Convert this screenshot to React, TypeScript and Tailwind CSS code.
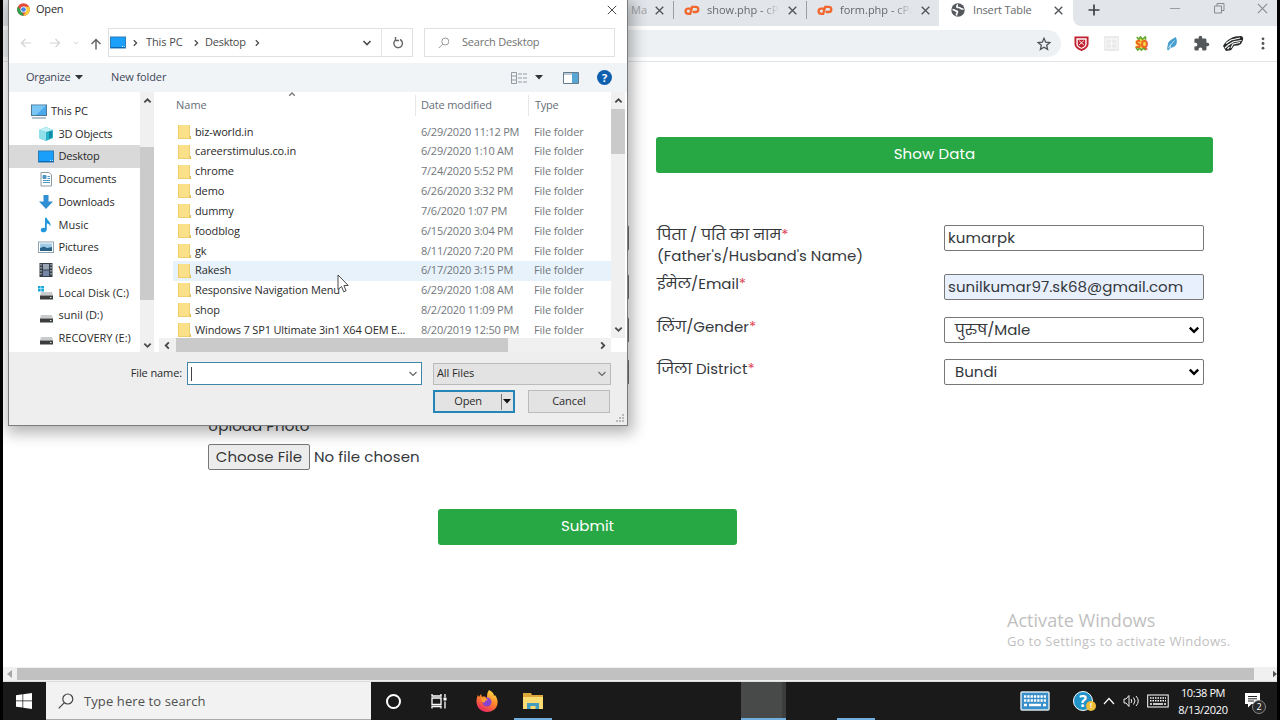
import React from 'react';

const UI = "font-['Open_Sans','Noto_Sans',sans-serif]";

const folders = [
  ['biz-world.in', '6/29/2020 11:12 PM'],
  ['careerstimulus.co.in', '6/29/2020 1:10 AM'],
  ['chrome', '7/24/2020 5:52 PM'],
  ['demo', '6/26/2020 3:32 PM'],
  ['dummy', '7/6/2020 1:07 PM'],
  ['foodblog', '6/15/2020 3:04 PM'],
  ['gk', '8/11/2020 7:20 PM'],
  ['Rakesh', '6/17/2020 3:15 PM'],
  ['Responsive Navigation Menu', '6/29/2020 1:08 AM'],
  ['shop', '8/2/2020 11:09 PM'],
  ['Windows 7 SP1 Ultimate 3in1 X64 OEM E...', '8/20/2019 12:50 PM'],
];

function Chevron({ dir, className = '' }: { dir: 'up' | 'down' | 'left' | 'right'; className?: string }) {
  const d = { up: 'M1.5 6 5 2.5 8.5 6', down: 'M1.5 3 5 6.5 8.5 3', left: 'M6.5 1.5 3 5 6.5 8.5', right: 'M3.5 1.5 7 5 3.5 8.5' }[dir];
  return (
    <svg viewBox="0 0 10 10" className={`shrink-0 ${className}`} fill="none" stroke="currentColor" strokeWidth="1.6">
      <path d={d} />
    </svg>
  );
}

function Cross({ className = '' }: { className?: string }) {
  return (
    <svg viewBox="0 0 10 10" className={`shrink-0 ${className}`} fill="none" stroke="currentColor">
      <path d="M.8.8l8.4 8.4M9.2.8.8 9.2" />
    </svg>
  );
}

function Monitor({ stand = false }: { stand?: boolean }) {
  return stand ? (
    <svg viewBox="0 0 16 15" className="h-[15px] w-4">
      <rect x=".5" y="1" width="15" height="10.5" fill="#4aa9ea" stroke="#4b7896" />
      <path d="M1 1.5h14L5 11H1z" fill="#7ac6f5" />
      <path d="M1 14h14" stroke="#6d8798" />
    </svg>
  ) : (
    <svg viewBox="0 0 16 15" className="h-[15px] w-4 shrink-0">
      <rect x=".5" y="2" width="15" height="11" fill="#1a9ffb" stroke="#2a7cb8" />
      <path d="M1 12.5h14" stroke="#0d66b0" />
      <path d="M12 11.5h1M14 11.5h.8" stroke="#d8efff" />
    </svg>
  );
}

function Drive({ win = false }: { win?: boolean }) {
  return (
    <svg viewBox="0 0 16 16" className="size-4">
      {win && <path d="M0 1h2.600v2.400H0zM3.200 1h2.800v2.400H3.200zM0 4h2.600v2.400H0zM3.200 4h2.800v2.400H3.200z" fill="#16a9dc" />}
      <path d="M3 7h11l1 3.500H2z" fill="#c9cccd" />
      <rect x="2" y="10.500" width="13" height="4" fill="#3c3d3e" />
      <path d="M12 12.5h1.500" stroke="#c8eebe" />
    </svg>
  );
}

const sidebar: [string, React.ReactNode][] = [
  ['3D Objects', <svg viewBox="0 0 16 16" className="size-4"><path d="M1 4l7-3 7 3v8l-7 3-7-3z" fill="#27b2c6" /><path d="M1 4l7 2v9l-7-3z" fill="#8fe0ea" /><path d="M1 4l7-3 7 3-7 2z" fill="#c3f1f5" /><path d="M11 6l3-1v6l-3 2z" fill="#118ba5" /></svg>],
  ['Desktop', <Monitor />],
  ['Documents', <svg viewBox="0 0 16 16" className="size-4"><path d="M3 1.5h8l2.500 2.500v11H3z" fill="#fff" stroke="#8d9aa3" /><path d="M5 4.500h3v3H5zM5 9.500h7M5 11.500h7M9.500 5.500h2.500M9.500 7.500h2.500" fill="#4e94c4" stroke="#4e94c4" /></svg>],
  ['Downloads', <svg viewBox="0 0 16 16" className="size-4"><path d="M5.500 1h5v6.500H15L8 15 1 7.500h4.500z" fill="#2f8fd2" /></svg>],
  ['Music', <svg viewBox="0 0 16 16" className="size-4"><path d="M7 .8h1.800c.3 3 4.600 4 3.500 8.700-.4-2-2-2.800-3.500-3.300v6.300c0 3.700-6.300 3.600-6 .5.200-2 2.500-2.700 4.200-1.900z" fill="#2196dc" /></svg>],
  ['Pictures', <svg viewBox="0 0 16 16" className="size-4"><rect x=".5" y="3" width="15" height="10.500" fill="#fff" stroke="#8da3b1" /><rect x="2" y="4.500" width="12" height="7.500" fill="#9fcbe9" /><path d="M2 12V9l4-1.500L9 9l5-1v4z" fill="#2a6188" /></svg>],
  ['Videos', <svg viewBox="0 0 16 16" className="size-4"><rect x="1.500" y="1" width="13" height="14" fill="#37404a" /><path d="M3 2v12M13 2v12" stroke="#d7dbe0" strokeDasharray="1.500 1.500" /><rect x="5" y="2" width="6" height="5.500" fill="#99a5b4" /><rect x="5" y="8.500" width="6" height="5.500" fill="#7587a6" /></svg>],
  ['Local Disk (C:)', <Drive win />],
  ['sunil (D:)', <Drive />],
  ['RECOVERY (E:)', <Drive />],
];

const sideTracking = ['tracking-[-0.2px]', 'tracking-[-0.2px]', 'tracking-[-0.1px]', 'tracking-[-0.15px]', 'tracking-[0px]', 'tracking-[-0.15px]', 'tracking-[-0.05px]', 'tracking-[0.02px]', 'tracking-[0px]', 'tracking-[0px]'];

function FolderIcon() {
  return (
    <svg viewBox="0 0 14 16" className="h-4 w-3.5 shrink-0">
      <path d="M0 1h12v11h1v3H0z" fill="#e3bd57" />
      <path d="M0 1h11.500v13.500H0z" fill="#fbe08a" />
      <path d="M0 1h1v13.500H0z" fill="#f0ca62" />
    </svg>
  );
}

function CpanelIcon() {
  return (
    <svg viewBox="0 0 16 11" className="h-[11px] w-4 shrink-0" fill="none" stroke="#f2672e" strokeWidth="2.300" strokeLinecap="round">
      <path d="M6.800 3.600H4.200a2.600 2.600 0 0 0 0 5.200h2l2-7h3.500a2.500 2.500 0 0 1 0 5.200H9.500" />
    </svg>
  );
}

function Tab({ title }: { title: string }) {
  return (
    <div className="flex h-full w-[133px] items-center pb-1.5">
      <span className="h-[18px] w-px shrink-0 bg-[#9b9fa4]" />
      <span className="ml-[10px] flex"><CpanelIcon /></span>
      <span className="ml-[7px] w-[76px] shrink-0 whitespace-nowrap text-[11px] text-[#66696c] [mask-image:linear-gradient(90deg,#000_72%,transparent_95%)]">{title}</span>
      <Cross className="ml-[5px] size-[9px] stroke-[1.5] text-[#505357]" />
    </div>
  );
}

function TabStrip() {
  return (
    <div className="flex h-[26px] shrink-0 bg-[#e2e5e9]">
      <div className="flex w-[670px] items-center justify-end pb-1.5 pr-[9px] text-[11px] text-[#a0a2a5]">
        <span className="mr-2">Ma</span>
        <Cross className="size-[9px] stroke-[1.5] text-[#505357]" />
      </div>
      <Tab title="show.php - cPa" />
      <Tab title="form.php - cPa" />
      <div className="flex w-[134px] items-center bg-white pb-1.5 pl-3">
        <svg viewBox="0 0 14 14" className="size-3.5 shrink-0"><circle cx="7" cy="7" r="6.700" fill="#54575b" /><path d="M1.500 6.500c2 .2 2 1 3.500 1.300s2 1 1 2.200-.3 1.600-.3 2.600M6 1.500c1 1-.6 1.600 0 2.600.8 1 2-.2 3 .8s1.600 1.700 3.500.8" fill="none" stroke="#fff" strokeWidth="1.700" /></svg>
        <span className="ml-2 w-[72px] whitespace-nowrap text-[11px] tracking-[-0.15px] text-[#66696c]">Insert Table</span>
        <Cross className="ml-[9px] size-[9px] stroke-[1.5] text-[#505357]" />
      </div>
      <div className="flex-1 bg-white">
        <div className="flex h-full items-center rounded-bl-lg bg-[#e2e5e9] pb-1.5 pl-[15px] text-[#888b8f]">
          <svg viewBox="0 0 12 12" className="size-3"><path d="M6 .5v11M.5 6h11" stroke="#3e4145" strokeWidth="1.700" /></svg>
          <span className="ml-[70px] h-px w-2.5 -translate-y-0.5 bg-[#9b9da1]" />
          <svg viewBox="0 0 12 12" className="ml-[33px] size-3 -translate-y-0.5" fill="none" stroke="currentColor"><path d="M1.500 4h7v7h-7zM4 4V1.500h7v7H8.500" /></svg>
          <Cross className="ml-8 size-[11px] -translate-y-0.5" />
        </div>
      </div>
    </div>
  );
}

function Toolbar() {
  return (
    <div className="flex h-9 shrink-0 items-center border-b border-[#e1e4e8] bg-white">
      <div className="flex h-[27px] w-[1058px] items-center justify-end rounded-r-full bg-[#eef1f3] pr-[10px]">
        <svg viewBox="0 0 16 16" className="size-3.5" fill="none" stroke="#505458" strokeWidth="1.500"><path d="m8 1.500 1.900 4.400 4.800.4-3.600 3.200 1 4.700L8 11.700l-4.100 2.500 1-4.700L1.300 6.300l4.800-.4z" /></svg>
      </div>
      <svg viewBox="0 0 16 16" className="ml-[13px] size-[15px]"><path d="M1.500 1.500h13v7c0 4-4 5.500-6.500 6.500-2.500-1-6.500-2.500-6.500-6.500z" fill="#fff" stroke="#c0202f" strokeWidth="2" /><path d="M4 4h8v5c0 2-4 3.500-4 3.500S4 11 4 9z" fill="#c0202f" /><path d="m5.500 5 5 4.500m0-4.500-5 4.500" stroke="#fff" /></svg>
      <svg viewBox="0 0 16 16" className="ml-[15px] size-[15px]"><rect width="16" height="16" rx="1" fill="#eaeaea" /><path d="M2 3h12v10H2zM8 3v10M4 8h8" fill="none" stroke="#f8f8f8" strokeWidth="1.200" /></svg>
      <div className="relative ml-[15px] flex size-[15px] items-center justify-center">
        <svg viewBox="0 0 16 16" className="absolute size-[15px]"><circle cx="8" cy="8" r="5.500" fill="#f8d748" /><path d="M3 1l2 2.500L7 1l2 2.500L12 1l.5 3M2 12l2 3 2-2 2 2 2-2 3 2" fill="none" stroke="#68a936" strokeWidth="1.800" /></svg>
        <span className="relative text-[10px] font-black leading-none tracking-[-0.5px] text-[#ea6520]">SQ</span>
      </div>
      <svg viewBox="0 0 16 16" className="ml-[15px] size-[15px]"><path d="M12.500 1c2 4 2 9-3 11l-3 1-2 2.500L3 14l1-4c0-5 4-6 8.500-9z" fill="#469fcf" /><path d="M4 13.500 11 5M7 13l-.5-4" stroke="#c9e8f6" fill="none" /></svg>
      <svg viewBox="0 0 24 24" className="ml-[14px] size-[17px]"><path d="M20.500 11H19V7a2 2 0 0 0-2-2h-4V3.500a2.500 2.500 0 0 0-5 0V5H4a2 2 0 0 0-2 2v3.800h1.500a2.700 2.700 0 0 1 0 5.400H2V20a2 2 0 0 0 2 2h3.800v-1.500a2.700 2.700 0 0 1 5.400 0V22H17a2 2 0 0 0 2-2v-4h1.500a2.500 2.500 0 0 0 0-5z" fill="#55585b" /></svg>
      <svg viewBox="0 0 22 17" className="ml-[12px] h-[17px] w-[22px]"><path d="M1 11C5 4 11 1 19 1c2 .5 2.500 2 2 4l-2 4-3 1.500-4 .2-3 4.500-5 .8-1-1.500z" fill="#292a2b" /><path d="m4 8.500 5-3.500L18 3M5.500 10.500l6-3.700 8-1.300M9 12.800l2-3.800 7-1.500M3 13l4-3.500M5.500 14l2-2" stroke="#fff" fill="none" strokeWidth="1.100" /></svg>
      <svg viewBox="0 0 4 16" className="ml-[17px] h-[15px] w-1"><circle cx="2" cy="3" r="1.500" fill="#515458" /><circle cx="2" cy="8" r="1.500" fill="#515458" /><circle cx="2" cy="13" r="1.500" fill="#515458" /></svg>
    </div>
  );
}

const star = <span className="text-[#e0485a]">*</span>;
const box = 'flex h-[26px] w-[260px] items-center rounded-[2px] border border-[#777] whitespace-nowrap';

function SelectBox({ value }: { value: string }) {
  return (
    <div className={`${box} justify-between bg-white pl-[10px] pr-[3px]`}>
      <span className="-mt-px">{value}</span>
      <Chevron dir="down" className="size-3 text-black [stroke-width:2]" />
    </div>
  );
}

function Page() {
  return (
    <main className="h-[605px] shrink-0 overflow-hidden bg-white pt-[74px] font-['Poppins','Inter','Noto_Sans_Devanagari',sans-serif] text-[15px] text-[#35383b]">
      <div className="ml-[653px] mt-px flex h-9 w-[557px] items-center justify-center rounded-[3px] bg-[#28a745] text-[15px] tracking-[0.1px] text-white"><span className="-mt-px">Show Data</span></div>
      <section className="ml-[205px] mt-[52px] grid grid-cols-[161px_288px_287px_260px] grid-rows-[49px_43px_42px_26px] leading-[21px]">
        <span /><div className={box} />
        <div className="-mt-px whitespace-nowrap"><div>पिता / पति का नाम{star}</div><div>(Father's/Husband's Name)</div></div>
        <div className={`${box} pl-[3px] tracking-[0.1px]`}><span className="-mt-px">kumarpk</span></div>
        <span /><div className={box} />
        <div className="-mt-px">ईमेल/Email{star}</div>
        <div className={`${box} bg-[#e8f0fe] pl-[3px] tracking-[0.05px]`}><span className="-mt-px">sunilkumar97.sk68@gmail.com</span></div>
        <span /><div className={box} />
        <div className="-mt-px">लिंग/Gender{star}</div>
        <SelectBox value="पुरुष/Male" />
        <span /><div className={box} />
        <div className="-mt-px">जिला District{star}</div>
        <SelectBox value="Bundi" />
      </section>
      <div className="ml-[205px] mt-[30px] h-[21px] leading-[21px] tracking-[0.06px]">Upload Photo</div>
      <div className="ml-[205px] mt-[8px] flex h-[26px] items-center gap-1 tracking-[0.06px]">
        <div className="flex h-[26px] w-[102px] items-center justify-center whitespace-nowrap rounded-[2px] border border-[#777] bg-[#ececec] text-black/80">Choose File</div>
        <span className="whitespace-nowrap">No file chosen</span>
      </div>
      <div className="ml-[435px] mt-[39px] flex h-9 w-[299px] items-center justify-center rounded-[3px] bg-[#28a745] text-white"><span className="-mt-0.5">Submit</span></div>
      <div className={`ml-[1004px] mt-[63px] whitespace-nowrap text-[#bfbfbf] ${UI}`}>
        <div className="text-[18px] leading-6 tracking-[0.04px]">Activate Windows</div>
        <div className="-mt-px text-[13px] leading-5 tracking-[0.3px]">Go to Settings to activate Windows.</div>
      </div>
    </main>
  );
}

function Dialog() {
  return (
    <div className="absolute left-[5px] top-0 flex h-[426px] w-[620px] flex-col border border-t-0 border-[#7a7d80] bg-white text-[11px] text-[#2a2a2a] shadow-[2px_4px_14px_3px_rgba(0,0,0,0.3)]">
      <div className="flex h-7 shrink-0 items-center pb-[9px] pl-2 pr-[10px]">
        <svg viewBox="0 0 14 14" className="size-[13px]"><circle cx="7" cy="7" r="6.800" fill="#e64a3c" /><path d="M1 3.800 5 9l2.500 4.800A6.800 6.800 0 0 1 1 3.800z" fill="#2ea150" /><path d="M7 4h6.200A6.800 6.800 0 0 1 7 13.800L9.800 8z" fill="#f7cb3b" /><circle cx="7" cy="7" r="3.200" fill="#fff" /><circle cx="7" cy="7" r="2.500" fill="#4383ea" /></svg>
        <span className="ml-1.5 flex-1 tracking-[-0.2px]">Open</span>
        <Cross className="size-2.5 text-[#4c4c4c]" />
      </div>
      <div className="flex h-[29px] shrink-0 items-center text-[#4a4a4a]">
        <svg viewBox="0 0 12 12" className="ml-[11px] size-3" fill="none" stroke="#d3d3d3" strokeWidth="1.200"><path d="M11 6H1.500M5.500 2l-4 4 4 4" /></svg>
        <svg viewBox="0 0 12 12" className="ml-[17px] size-3" fill="none" stroke="#d3d3d3" strokeWidth="1.200"><path d="M1 6h9.500M6.500 2l4 4-4 4" /></svg>
        <Chevron dir="down" className="ml-[12px] size-1.5 text-[#d3d3d3]" />
        <svg viewBox="0 0 12 12" className="ml-[11px] mt-0.5 size-3" fill="none" stroke="#666" strokeWidth="1.500"><path d="M6 11.500V1.500M1.500 6 6 1.500 10.500 6" /></svg>
        <div className="ml-[6px] flex h-[29px] w-[305px] items-center border border-[#e0e0e0] pl-px">
          <Monitor />
          <Chevron dir="right" className="ml-[5px] size-2" />
          <span className="ml-[7px] w-[38px] whitespace-nowrap tracking-[-0.1px]">This PC</span>
          <Chevron dir="right" className="ml-2 size-2" />
          <span className="ml-[5px] w-[42px] tracking-[-0.25px]">Desktop</span>
          <Chevron dir="right" className="ml-[6px] size-2" />
          <Chevron dir="down" className="ml-auto size-2.5" />
          <span className="ml-[9px] h-full w-px bg-[#e4e4e4]" />
          <svg viewBox="0 0 12 12" className="ml-[10px] mr-2 size-3" fill="none" stroke="#666" strokeWidth="1.400"><path d="M3.500 3A4.300 4.300 0 1 0 8 2.500M3.500 0v3.500H7" /></svg>
        </div>
        <div className="ml-[11px] flex h-[29px] w-[191px] items-center whitespace-nowrap border border-[#e0e0e0] pl-[13px] text-[#727272]">
          <svg viewBox="0 0 12 12" className="size-3" fill="none" stroke="#999"><circle cx="7.300" cy="4.500" r="3.500" /><path d="M4.800 7 .8 11" /></svg>
          <span className="ml-[12px] tracking-[-0.2px]">Search Desktop</span>
        </div>
      </div>
      <div className="mt-1.5 flex h-[29px] shrink-0 items-center bg-[#f1f4f7] pl-[17px] text-[#3e4657]">
        <span className="w-[45px] tracking-[-0.2px]">Organize</span>
        <svg viewBox="0 0 8 5" className="ml-1 h-[5px] w-2"><path d="M0 0h8L4 4.500z" fill="#333" /></svg>
        <span className="ml-7 w-[60px] whitespace-nowrap tracking-[-0.1px]">New folder</span>
        <svg viewBox="0 0 16 12" className="ml-[340px] h-3 w-4" fill="none" stroke="#959ba1"><path d="M.5.5h5v11h-5zM.5 4h5M.5 8h5M7 2h4M12 2h4M7 6h4M12 6h4M7 10h4M12 10h4" /></svg>
        <svg viewBox="0 0 8 5" className="ml-2 h-[5px] w-2"><path d="M0 0h8L4 4.500z" fill="#333" /></svg>
        <svg viewBox="0 0 16 12" className="ml-5 h-3 w-4"><path d="M.5.5h15v11H.5z" fill="#fff" stroke="#637b8c" /><path d="M1 2h14" stroke="#7a98b0" /><path d="M9 1h6v10H9z" fill="#58a6d4" /></svg>
        <div className="ml-[18px] flex size-[15px] items-center justify-center rounded-full bg-[#0f5faf] text-[11px] font-bold leading-none text-white">?</div>
      </div>
      <div className="flex h-[260px] shrink-0">
        <div className="w-[131px] pt-2">
          <div className="flex h-[22.7px] items-center pl-[22px]"><Monitor stand /><span className="ml-[4px] tracking-[-0.05px]">This PC</span></div>
          {sidebar.map(([name, icon], i) => (
            <div key={name} className={`flex h-[22.7px] items-center whitespace-nowrap pl-[29px] ${i === 1 ? 'bg-[#d9d9d9]' : ''}`}>
              {icon}<span className={`ml-[4.5px] ${sideTracking[i]}`}>{name}</span>
            </div>
          ))}
        </div>
        <div className="flex w-[14px] flex-col items-center bg-[#f0f0f0] pb-[2px] pt-[5px] text-[#484848]">
          <Chevron dir="up" className="size-[9px] stroke-[2]" />
          <div className="mt-[41px] h-[153px] w-full bg-[#cbcbcb]" />
          <Chevron dir="down" className="mt-auto size-[9px] stroke-[2]" />
        </div>
        <div className="ml-[5px] flex w-[452px] flex-col">
          <div className="relative flex h-[30px] shrink-0 items-center pb-1 text-[#666e77]">
            <span className="ml-[17px] w-[239px]">Name</span>
            <span className="flex h-[21px] w-[113px] items-center border-l border-[#e6e6e6] pl-[5px] tracking-[-0.15px]">Date modified</span>
            <span className="flex h-[21px] items-center border-l border-[#e6e6e6] pl-[6px] tracking-[-0.3px]">Type</span>
            <Chevron dir="up" className="absolute left-[129px] top-[-1px] size-2 text-[#777]" />
          </div>
          <div className="h-[216px] overflow-hidden">
            {folders.map(([name, date], i) => (
              <div key={name} className={`ml-[14px] flex h-[19.82px] items-center whitespace-nowrap pl-[5px] ${i === 7 ? 'bg-[#e7f2fb]' : ''}`}>
                <FolderIcon />
                <span className={`ml-[3px] w-[226px] ${i === 10 ? 'tracking-[-0.15px]' : 'tracking-[-0.12px]'}`}>{name}</span>
                <span className="w-[113px] tracking-[-0.23px] text-[#72777c]">{date}</span>
                <span className="tracking-[-0.1px] text-[#72777c]">File folder</span>
              </div>
            ))}
          </div>
          <div className="flex h-[14px] items-center bg-[#f0f0f0] pl-1 pr-[4px] text-[#484848]">
            <Chevron dir="left" className="size-[9px] stroke-[2]" />
            <div className="ml-[4px] h-full w-[332px] bg-[#cacaca]" />
            <Chevron dir="right" className="ml-auto size-[9px] stroke-[2]" />
          </div>
        </div>
        <div className="h-[246px] w-[14px] bg-[#f0f0f0] text-[#484848]">
          <div className="flex h-full flex-col items-center pb-1 pt-[5px]">
            <Chevron dir="up" className="size-[9px] stroke-[2]" />
            <div className="mt-[3px] h-[45px] w-full bg-[#cacaca]" />
            <Chevron dir="down" className="mt-auto size-[9px] stroke-[2]" />
          </div>
        </div>
      </div>
      <div className="relative flex-1 bg-[#eee] pt-[10px]">
        <div className="flex items-center">
          <span className="w-[178px] pr-[5px] text-right tracking-[-0.1px]">File name:</span>
          <div className="flex h-[23px] w-[235px] items-center justify-between border border-[#3f86a8] bg-white px-[3px]"><span className="h-[14px] w-px bg-[#444]" /><Chevron dir="down" className="size-2.5 stroke-[1.2] text-[#666]" /></div>
          <div className="ml-[11px] flex h-[22px] w-[178px] items-center justify-between border border-[#bbb] bg-[#e3e3e3] px-[3px]"><span className="whitespace-nowrap tracking-[-0.1px]">All Files</span><Chevron dir="down" className="size-2.5 stroke-[1.2] text-[#666]" /></div>
        </div>
        <div className="ml-[424px] mt-[5px] flex">
          <div className="flex h-[23px] w-[82px] items-center border-2 border-[#2585b6] bg-[#e3e3e3]">
            <span className="w-[66px] text-center tracking-[-0.2px]">Open</span><span className="h-4 w-px bg-[#777]" />
            <svg viewBox="0 0 8 5" className="ml-px h-[5px] w-2"><path d="M0 0h8L4 4.500z" fill="#111" /></svg>
          </div>
          <div className="ml-[13px] flex h-[23px] w-[82px] items-center justify-center border border-[#bbb] bg-[#e3e3e3] tracking-[-0.1px]">Cancel</div>
        </div>
        <svg viewBox="0 0 9 9" className="absolute bottom-0.5 right-0.5 size-[9px]" fill="#b9b9b9"><path d="M6 0h2v2H6zM3 3h2v2H3zM6 3h2v2H6zM0 6h2v2H0zM3 6h2v2H3zM6 6h2v2H6z" /></svg>
      </div>
      <svg viewBox="0 0 12 19" className="absolute left-[328px] top-[274px] h-[19px] w-3"><path d="M1 1v14.500l3.500-3 2.200 5.300 2.400-1-2.200-5.200 4.300-.2z" fill="#fff" stroke="#333" strokeWidth=".9" /></svg>
    </div>
  );
}

function Taskbar() {
  return (
    <footer className="flex h-[38px] shrink-0 items-center overflow-hidden bg-[#1a1a1b] text-white">
      <div className="flex w-[43px] justify-center">
        <svg viewBox="0 0 16 16" className="size-4 -translate-x-px" fill="#fff"><path d="M0 2.200 6.500 1.300v6.300H0zM7.200 1.200 16 0v7.600H7.200zM0 8.300h6.500v6.300L0 13.700zM7.200 8.300H16v7.600l-8.800-1.200z" /></svg>
      </div>
      <div className="flex h-full w-[325px] items-center border-b border-[#aaa] bg-[#f2f2f2] pl-3 text-[#505050]">
        <svg viewBox="0 0 16 16" className="size-4" fill="none" stroke="#444" strokeWidth="1.200"><circle cx="9.800" cy="6" r="5" /><path d="M6.200 9.800.7 15.300" /></svg>
        <span className="ml-[10px] mt-[2px] whitespace-nowrap text-[13px] tracking-[0.1px]">Type here to search</span>
      </div>
      <span className="ml-[15px] size-[15px] rounded-full border-2 border-white" />
      <svg viewBox="0 0 17 16" className="ml-[29px] h-4 w-[17px]" fill="none" stroke="#fff" strokeWidth="1.300"><path d="M2 1v2h9V1M2 5h9v6.500H2zM2 15.500v-2h9v2M15 1v3M15 8.500v7" /><path d="M13.500 4.500h3v3h-3z" fill="#fff" stroke="none" /></svg>
      <svg viewBox="0 0 24 24" className="ml-[28px] size-6">
        <defs><linearGradient id="fox" x1=".8" y1="0" x2=".3" y2="1"><stop stopColor="#ffe14a" /><stop offset=".5" stopColor="#ff8328" /><stop offset="1" stopColor="#e82467" /></linearGradient></defs>
        <path d="M14 1c4 2 5 4 5 6l1-1c6 8 1 17-8 17C3 23-1 14 3 6l1 2 2-3 1 3c2-1 4 0 5 1 0-3 0-5 2-8z" fill="url(#fox)" /><circle cx="12" cy="13" r="4.500" fill="#8a43cf" /><path d="M6 9c3-1 5 0 7 2-2 0-3 1-4 3-2-1-3-3-3-5z" fill="#ff9c32" />
      </svg>
      <div className="ml-[15px] flex h-full w-[38px] items-center justify-center border-b-2 border-[#70aee0]">
        <svg viewBox="0 0 22 18" className="mt-0.5 h-[18px] w-[22px]"><path d="M1 1h8l1 2h11v13H1z" fill="#dba93b" /><path d="M1 5h20v12H1z" fill="#fbdc73" /><path d="M5 17v-6h12v6h-3.500v-3h-5v3z" fill="#459cc1" /></svg>
      </div>
      <div className="ml-[189px] h-full w-[41px] border-b-2 border-[#70aee0] bg-[#484949]" />
      <div className="h-full w-1 border-b-2 border-[#70aee0] bg-[#3c3d3e]" />
      <div className="ml-[51px] h-full w-[38px] border-b-2 border-[#70aee0]" />
      <svg viewBox="0 0 30 20" className="ml-[145px] h-5 w-[30px]"><rect x="1" y="1" width="28" height="18" rx="1" fill="#398fc9" stroke="#d7e6ed" strokeWidth="1.500" /><path d="M4 5.500h22M4 9.500h22" stroke="#fff" strokeWidth="2.500" strokeDasharray="2.300 1" /><path d="M4 14h3M9 14h12M23 14h3" stroke="#fff" strokeWidth="2.500" /></svg>
      <div className="relative ml-[23px] flex size-5 shrink-0 items-center justify-center rounded-full border-[1.5px] border-white bg-[#2193c8] text-[16px] font-bold leading-none">?
        <span className="absolute -right-1 bottom-[-1px] size-2.5 rounded-full bg-[#efbd38] text-center text-[7px] leading-[10px]">!</span>
      </div>
      <svg viewBox="0 0 12 8" className="ml-[10px] h-2 w-3" fill="none" stroke="#fff" strokeWidth="1.200"><path d="M1 7l5-5.500L11 7" /></svg>
      <svg viewBox="0 0 17 14" className="ml-[8px] h-3.5 w-[17px]" fill="none" stroke="#eee"><path d="M1 5h2l3-3.500v11L3 9H1zM8 5q1.500 2 0 4M10.500 3.500q3 3.500 0 7M13 2q4.500 5 0 10" /></svg>
      <svg viewBox="0 0 22 14" className="ml-[7px] h-3.5 w-[22px]" fill="none" stroke="#fff"><rect x=".7" y="1" width="20.500" height="12" /><path d="M3 4h16M3 6.800h16" strokeDasharray="1.500 1" strokeWidth="1.400" /><path d="M3 10h2M6 10h10M17 10h2" strokeWidth="1.400" /></svg>
      <div className="ml-[5px] w-[58px] whitespace-nowrap text-center text-[11px] leading-[17px] tracking-[-0.4px]"><div>10:38 PM</div><div className="tracking-[-0.3px]">8/13/2020</div></div>
      <div className="relative ml-[13px]">
        <svg viewBox="0 0 16 16" className="size-4"><path d="M0 0h15v11H6.500L3 14.500V11H0z" fill="#fff" /><path d="M3 3.500h9M3 5.800h9M3 8h6" stroke="#222" /></svg>
        <span className="absolute left-[7px] top-[7px] flex size-3.5 items-center justify-center rounded-full border border-[#888] bg-[#292929] text-[9px]">2</span>
      </div>
    </footer>
  );
}

export default function App() {
  return (
    <div className="h-[720px] w-[1280px] overflow-hidden bg-black px-[3px]">
      <div className={`relative flex h-full w-[1274px] flex-col ${UI}`}>
        <TabStrip />
        <Toolbar />
        <Page />
        <div className="flex h-[15px] shrink-0 items-center border-b border-[#ddd] bg-[#f0f0f0] pl-1">
          <svg viewBox="0 0 5 8" className="h-2 w-[5px]"><path d="M5 0v8L0 4z" fill="#a5a5a5" /></svg>
          <div className="ml-[5px] h-3 w-[1237px] bg-[#c1c1c1]" />
          <svg viewBox="0 0 5 8" className="ml-auto h-2 w-[4px]"><path d="M0 0v8l5-4z" fill="#555" /></svg>
        </div>
        <Taskbar />
        <Dialog />
      </div>
    </div>
  );
}
